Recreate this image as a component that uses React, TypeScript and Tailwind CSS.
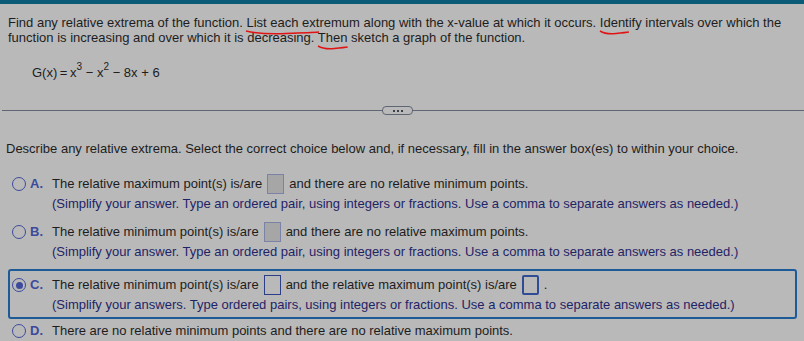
import React from 'react'

const font = { fontFamily: '"Liberation Sans", Arial, sans-serif' }

function Radio({ checked }: { checked?: boolean }) {
  return (
    <span className="w-[14px] h-[14px] rounded-full border-[1.5px] border-[#3d4a9c] flex items-center justify-center shrink-0">
      {checked && <span className="w-[7px] h-[7px] rounded-full bg-[#3d4a9c]" />}
    </span>
  )
}

function Box({ filled, focus }: { filled?: boolean; focus?: boolean }) {
  return (
    <span
      className={
        'inline-block align-middle w-[17px] h-[20px] mx-[5px] ' +
        (filled
          ? 'bg-[#a6a6a6] border border-[#7a83a6]'
          : focus
          ? 'border-2 border-[#2f4d95] rounded-[2px]'
          : 'border border-[#2c3f86]')
      }
    />
  )
}

// red pen stroke drawn under a few words
function Marked({ children }: { children: React.ReactNode }) {
  return (
    <span className="relative">
      {children}
      <svg
        className="absolute left-0 top-full w-full h-[5px] overflow-visible pointer-events-none"
        viewBox="0 0 100 5"
        preserveAspectRatio="none"
      >
        <path d="M0 1 Q 20 4.5 55 3.5 T 100 2" fill="none" stroke="#e01414" strokeWidth="1.6" vectorEffect="non-scaling-stroke" />
      </svg>
    </span>
  )
}

function Choice({
  letter,
  line1,
  line2,
  checked,
  className = '',
}: {
  letter: string
  line1: React.ReactNode
  line2?: string
  checked?: boolean
  className?: string
}) {
  return (
    <div
      className={
        'flex items-start ' +
        (checked
          ? 'border-2 border-[#1c5a98] rounded-[3px] ml-[8px] mr-[7px] pl-[2px] pt-[4px] pb-[2px] '
          : 'pl-[12px] ') +
        className
      }
    >
      <div className="flex items-center h-[20px] gap-[4px] w-[40px] shrink-0">
        <Radio checked={checked} />
        <span className="text-[#3d4a9c] font-bold text-[13px]">{letter}</span>
      </div>
      <div className="text-[13px]">
        <div className="text-[#1d1d1d] flex items-center h-[20px] whitespace-nowrap">{line1}</div>
        {line2 && <div className="text-[#1f2467] leading-[20px] whitespace-nowrap">{line2}</div>}
      </div>
    </div>
  )
}

export default function App() {
  return (
    <div className="w-[804px] h-[341px] bg-[#b9b9b9] overflow-hidden" style={font}>
      <div className="h-[4px] bg-[#0a5a78]" />
      <div className="px-[8px] pt-[11px] text-[13px] leading-[15px] text-[#1d1d1d]">
        <p>
          Find any relative extrema of the function. <Marked>List each ext</Marked>remum along with the x-value at which it
          occurs. <Marked>Ident</Marked>ify intervals over which the function is increasing and over which it is decreasing.{' '}
          <Marked>Then</Marked> sketch a graph of the function.
        </p>
        <div className="pl-[24px] pt-[20px] text-[13px] leading-[16px]">
          G(x)&thinsp;=&thinsp;x<span className="relative top-[-7px] text-[10px]">3</span> − x
          <span className="relative top-[-7px] text-[10px]">2</span> − 8x + 6
        </div>
      </div>
      <div className="flex items-center mt-[24px] pl-[2px]">
        <div className="w-[380px] h-px bg-[#5f6573]" />
        <div className="w-[31px] h-[9px] border border-[#5f6573] rounded-[4px] flex items-center justify-center gap-[2px]">
          <span className="w-[2px] h-[2px] bg-[#3a3f4a]" />
          <span className="w-[2px] h-[2px] bg-[#3a3f4a]" />
          <span className="w-[2px] h-[2px] bg-[#3a3f4a]" />
        </div>
        <div className="flex-1 h-px bg-[#5f6573]" />
      </div>
      <p className="pl-[6px] mt-[26px] text-[13px] leading-[16px] text-[#1d1d1d]">
        Describe any relative extrema. Select the correct choice below and, if necessary, fill in the answer box(es) to within your choice.
      </p>
      <div className="mt-[17px] flex flex-col">
        <Choice
          letter="A."
          line1={
            <>
              The relative maximum point(s) is/are
              <Box filled />
              and there are no relative minimum points.
            </>
          }
          line2="(Simplify your answer. Type an ordered pair, using integers or fractions. Use a comma to separate answers as needed.)"
        />
        <Choice
          letter="B."
          className="mt-[8px]"
          line1={
            <>
              The relative minimum point(s) is/are
              <Box filled />
              and there are no relative maximum points.
            </>
          }
          line2="(Simplify your answer. Type an ordered pair, using integers or fractions. Use a comma to separate answers as needed.)"
        />
        <Choice
          letter="C."
          checked
          className="mt-[7px]"
          line1={
            <>
              The relative minimum point(s) is/are
              <Box />
              and the relative maximum point(s) is/are
              <Box focus />.
            </>
          }
          line2="(Simplify your answers. Type ordered pairs, using integers or fractions. Use a comma to separate answers as needed.)"
        />
        <Choice
          letter="D."
          className="mt-[2px]"
          line1="There are no relative minimum points and there are no relative maximum points."
        />
      </div>
    </div>
  )
}
